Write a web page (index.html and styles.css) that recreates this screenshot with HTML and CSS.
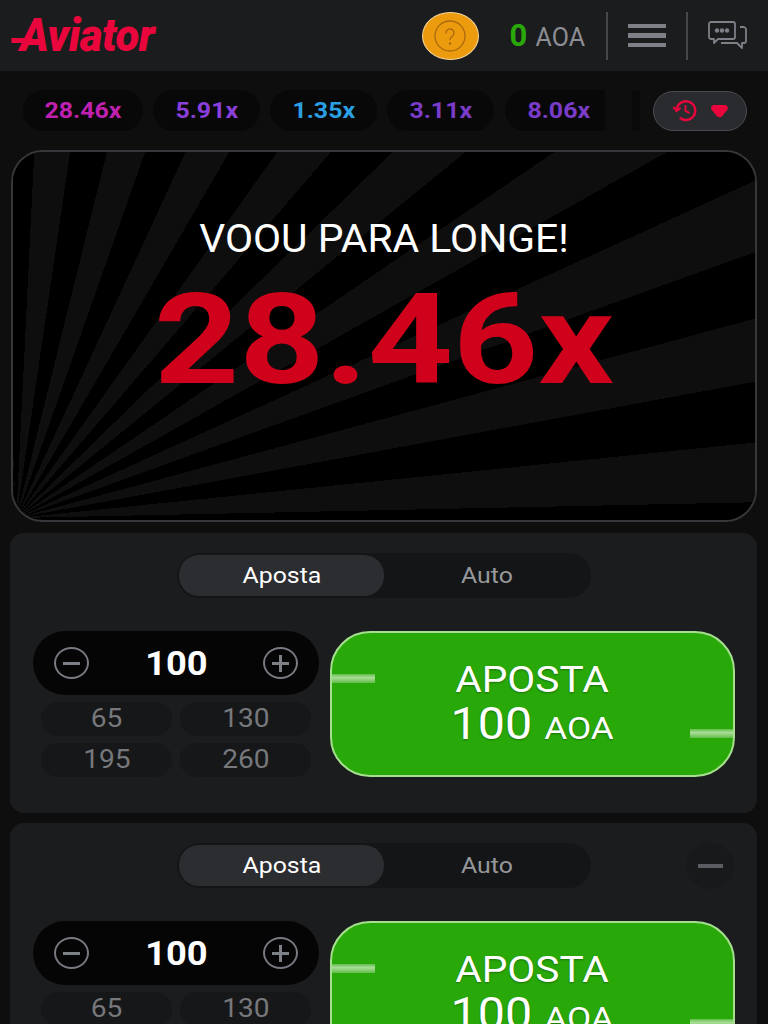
FILE: index.html
```html
<!DOCTYPE html>
<html lang="pt">
<head>
    <meta charset="UTF-8">
    <meta name="viewport" content="width=device-width, initial-scale=1.0">
    <title>Aviator</title>
    <link rel="stylesheet" href="styles.css">
</head>
<body>
    <header class="topbar">
        <div class="logo"><span class="logo-text">Aviator</span></div>
        <div class="coin">
            <svg viewBox="0 0 32 32" width="32" height="32" fill="none" stroke="#a8690d" stroke-width="1.3">
                <circle cx="16" cy="16" r="15"/>
                <path d="M12 13a4 4 0 1 1 6.3 3.2c-1.4 1-2.3 1.8-2.3 3.3" stroke-linecap="round"/>
                <circle cx="16" cy="23.5" r=".6"/>
            </svg>
        </div>
        <div class="balance"><b>0</b> AOA</div>
        <div class="top-divider"></div>
        <div class="burger"><span></span><span></span><span></span></div>
        <div class="top-divider"></div>
        <svg class="chat-icon" viewBox="0 0 40 30" width="40" height="30" fill="none" stroke="#7d8087" stroke-width="1.8" stroke-linejoin="round">
            <path d="M3 1h22a2 2 0 0 1 2 2v13a2 2 0 0 1-2 2H10l-4 4v-4H3a2 2 0 0 1-2-2V3a2 2 0 0 1 2-2z"/>
            <path d="M32 6h4a3 3 0 0 1 2 2v12a2 2 0 0 1-2 2h-2v5l-5-5H13"/>
            <circle cx="9" cy="9.5" r="2.2" fill="#7d8087" stroke="none"/>
            <circle cx="14" cy="9.5" r="2.2" fill="#7d8087" stroke="none"/>
            <circle cx="19" cy="9.5" r="2.2" fill="#7d8087" stroke="none"/>
        </svg>
    </header>

    <div class="history">
        <div class="chips">
            <div class="chip chip-first c-pink"><span class="wide">28.46x</span></div>
            <div class="chip c-violet"><span class="wide">5.91x</span></div>
            <div class="chip c-blue"><span class="wide">1.35x</span></div>
            <div class="chip c-purple"><span class="wide">3.11x</span></div>
            <div class="chip chip-cut c-purple"><span class="wide">8.06x</span></div>
        </div>
        <div class="chips-end"></div>
        <div class="history-btn">
            <svg viewBox="0 0 28 28" width="29" height="25" fill="none" stroke="#e8063c" stroke-width="2.6">
                <path d="M4 13.5A10.5 10.5 0 1 1 7.5 22"/>
                <path d="M.5 10L4 14.5 8.5 11" stroke-width="2.4"/>
                <path d="M14 8v6.5l4.5 2.5" stroke-width="2.2"/>
            </svg>
            <svg viewBox="0 0 20 16" width="19" height="14">
                <path d="M4 1h12c3 0 4.5 3 3 5.5l-6 7.500c-1.500 1.500-4.500 1.500-6 0L1 6.500C-.5 4 1 1 4 1z" fill="#e8063c"/>
            </svg>
        </div>
    </div>

    <main class="content">
        <section class="game">
            <div class="game-title">VOOU PARA LONGE!</div>
            <div class="game-mult">28.46x</div>
        </section>

        <section class="panel">
            <div class="panel-top">
                <div class="tabs">
                    <div class="tab tab-active"><span class="wide">Aposta</span></div>
                    <div class="tab"><span class="wide">Auto</span></div>
                </div>
            </div>
            <div class="bet-row">
                <div class="bet-left">
                    <div class="stepper">
                        <div class="step-btn"><span class="step-minus"></span></div>
                        <div class="step-value">100</div>
                        <div class="step-btn"><span class="step-minus"></span><span class="step-plus"></span></div>
                    </div>
                    <div class="quick">
                        <div class="quick-item"><span class="wide">65</span></div>
                        <div class="quick-item"><span class="wide">130</span></div>
                        <div class="quick-item"><span class="wide">195</span></div>
                        <div class="quick-item"><span class="wide">260</span></div>
                    </div>
                </div>
                <div class="bet-btn">
                    <div class="bet-label"><span class="wide">APOSTA</span></div>
                    <div class="bet-amount"><span class="wide">100 <small>AOA</small></span></div>
                </div>
            </div>
        </section>

        <section class="panel">
            <div class="panel-top">
                <div class="tabs">
                    <div class="tab tab-active"><span class="wide">Aposta</span></div>
                    <div class="tab"><span class="wide">Auto</span></div>
                </div>
                <div class="remove-btn"><span></span></div>
            </div>
            <div class="bet-row">
                <div class="bet-left">
                    <div class="stepper">
                        <div class="step-btn"><span class="step-minus"></span></div>
                        <div class="step-value">100</div>
                        <div class="step-btn"><span class="step-minus"></span><span class="step-plus"></span></div>
                    </div>
                    <div class="quick">
                        <div class="quick-item"><span class="wide">65</span></div>
                        <div class="quick-item"><span class="wide">130</span></div>
                        <div class="quick-item"><span class="wide">195</span></div>
                        <div class="quick-item"><span class="wide">260</span></div>
                    </div>
                </div>
                <div class="bet-btn">
                    <div class="bet-label"><span class="wide">APOSTA</span></div>
                    <div class="bet-amount"><span class="wide">100 <small>AOA</small></span></div>
                </div>
            </div>
        </section>
    </main>
</body>
</html>
```

FILE: styles.css
```css
* {
    margin: 0;
    padding: 0;
    box-sizing: border-box;
}

html, body {
    height: 1024px;
    overflow: hidden;
}

body {
    background: #0e0e0f;
    font-family: Roboto, "Liberation Sans", sans-serif;
}

.wide {
    display: inline-block;
    transform: scaleX(1.13);
}

/* top bar */
.topbar {
    display: flex;
    align-items: center;
    height: 71px;
    padding: 0 20px 0 20px;
    background: #1b1c1e;
}

.logo {
    flex: 1;
    padding-top: 10px;
    line-height: 61px;
}

.logo-text {
    position: relative;
    display: inline-block;
    color: #e8063c;
    font-size: 46px;
    font-weight: 900;
    font-style: italic;
    letter-spacing: -.5px;
    transform: scaleX(.95);
    transform-origin: left center;
}

.logo-text::before {
    content: "";
    position: absolute;
    top: 33px;
    left: -9px;
    width: 22px;
    height: 5px;
    background: #e8063c;
}

.coin {
    display: flex;
    align-items: center;
    justify-content: center;
    width: 57px;
    height: 48px;
    margin-right: 31px;
    border: 1px solid #f7d79a;
    border-radius: 50%;
    background: #ec9a0e;
}

.balance {
    margin-right: 21px;
    color: #8c8e93;
    font-size: 25px;
}

.balance b {
    margin-right: 2px;
    color: #2aa80a;
    font-size: 31px;
    font-weight: 700;
}

.top-divider {
    width: 2px;
    height: 48px;
    background: #45474b;
}

.burger {
    display: flex;
    flex-direction: column;
    gap: 5px;
    width: 38px;
    margin: 0 20px;
}

.burger span {
    height: 4.5px;
    background: #7d8087;
}

.chat-icon {
    margin-left: 20px;
}

/* history strip */
.history {
    display: flex;
    align-items: center;
    height: 79px;
    padding: 0 21px 0 23px;
}

.chips {
    display: flex;
    gap: 10px;
    width: 582px;
}

.chip {
    width: 107px;
    height: 41px;
    border-radius: 21px;
    background: #080808;
    font-size: 22px;
    font-weight: 700;
    line-height: 41px;
    text-align: center;
}

.chip-first {
    width: 120px;
}

.chip-cut {
    width: 100px;
    margin-left: 1px;
    padding-left: 7px;
    border-radius: 21px 0 0 21px;
}

.c-pink { color: #c020b0; }
.c-violet { color: #8a3fdc; }
.c-blue { color: #2b9fe4; }
.c-purple { color: #7a3cc8; }

.chips-end {
    width: 8px;
    height: 40px;
    margin: 0 13px 0 27px;
    background: #0a0a0a;
}

.history-btn {
    display: flex;
    align-items: center;
    gap: 10px;
    justify-content: center;
    width: 94px;
    height: 40px;
    border: 1px solid #4b4c50;
    border-radius: 20px;
    background: #2a2b2e;
}

/* game area */
.content {
    display: flex;
    flex-direction: column;
    gap: 10px;
    padding: 0 11px 0 10px;
}

.game {
    position: relative;
    height: 372px;
    margin-left: 1px;
    margin-bottom: 1px;
    padding-top: 64px;
    overflow: hidden;
    border: 2px solid #36373a;
    border-radius: 32px;
    background: #000;
    text-align: center;
}

/* sunburst rays, fanned from the bottom left corner */
.game::before {
    content: "";
    position: absolute;
    top: 0;
    left: 0;
    width: calc(100% / 1.1);
    height: 100%;
    background: repeating-conic-gradient(from -2.515deg at 3px 366px, #000 0 5.065deg, #0e0e0f 5.065deg 10.13deg);
    transform: scaleX(1.1);
    transform-origin: left top;
}

.game-title {
    position: relative;
    color: #fff;
    font-size: 38px;
    line-height: 46px;
    transform: scaleX(1.075);
}

.game-mult {
    position: relative;
    margin-top: 3px;
    color: #d0021b;
    font-size: 126px;
    font-weight: 700;
    line-height: 150px;
    transform: scaleX(1.18);
}

/* bet panels */
.panel {
    height: 280px;
    padding: 20px 22px 0 23px;
    border-radius: 14px;
    background: #1b1c1e;
}

.panel-top {
    display: grid;
    grid-template-columns: 1fr 414px 1fr;
    grid-template-rows: 45px;
    align-items: center;
    margin-bottom: 33px;
}

.tabs {
    grid-column: 2;
    display: flex;
    height: 45px;
    padding: 2px;
    border-radius: 23px;
    background: #141516;
}

.tab {
    flex: 1;
    color: #97989b;
    font-size: 22px;
    line-height: 41px;
    text-align: center;
}

.tab-active {
    border-radius: 20px;
    background: #2c2d31;
    color: #fff;
}

.remove-btn {
    display: flex;
    align-items: center;
    justify-content: center;
    justify-self: end;
    width: 48px;
    height: 46px;
    margin-right: 1px;
    border-radius: 50%;
    background: #18191b;
}

.remove-btn span {
    width: 25px;
    height: 4px;
    background: #5a5c62;
}

.bet-row {
    display: flex;
    gap: 11px;
}

.bet-left {
    width: 286px;
}

.stepper {
    display: flex;
    align-items: center;
    justify-content: space-between;
    height: 64px;
    padding: 0 21px;
    border-radius: 32px;
    background: #050505;
}

.step-btn {
    position: relative;
    width: 35px;
    height: 32px;
    border: 2px solid #777a80;
    border-radius: 50%;
}

.step-minus,
.step-plus {
    position: absolute;
    top: 12.5px;
    left: 7px;
    width: 17px;
    height: 3px;
    background: #7d8087;
}

.step-plus {
    transform: rotate(90deg);
}

.step-value {
    color: #fff;
    font-size: 33px;
    font-weight: 700;
    transform: scaleX(1.1);
}

.quick {
    display: grid;
    grid-template-columns: 131px 131px;
    gap: 7px 8px;
    margin-top: 7px;
    padding-left: 8px;
}

.quick-item {
    height: 34px;
    border-radius: 17px;
    background: #161718;
    color: #77787b;
    font-size: 26px;
    line-height: 32px;
    text-align: center;
}

.quick-item .wide {
    transform: scaleX(1.08);
}

.bet-btn {
    position: relative;
    width: 405px;
    height: 146px;
    padding-top: 26px;
    border: 2px solid #a6e08f;
    border-radius: 40px;
    background: #29a909;
    color: #fff;
    text-align: center;
    text-shadow: 0 1px 2px rgba(0,0,0,.35);
}

.bet-btn::before,
.bet-btn::after {
    content: "";
    position: absolute;
    width: 43px;
    height: 9px;
    background: linear-gradient(#62bd4a, #a9dd98 40%, #62bd4a);
}

.bet-btn::before {
    top: 41px;
    left: 0;
}

.bet-btn::after {
    top: 96px;
    right: 0;
}

.bet-label {
    margin-right: 2px;
    font-size: 36px;
    line-height: 42px;
}

.bet-amount {
    font-size: 44px;
    line-height: 46px;
}

.bet-amount .wide {
    transform: scaleX(1.1);
}

.bet-amount small {
    font-size: 32px;
}
```
